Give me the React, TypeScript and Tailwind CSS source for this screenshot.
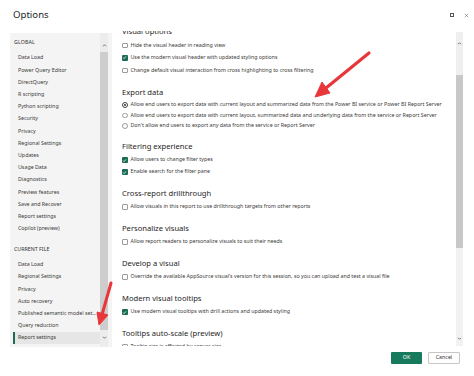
import React from "react";

function Box({ checked }: { checked?: boolean }) {
  if (checked)
    return (
      <span className="w-[5.5px] h-[5.5px] rounded-[1px] bg-[#1c6b57] flex items-center justify-center shrink-0">
        <svg viewBox="0 0 10 10" className="w-[5px] h-[5px]">
          <path d="M2.2 5.2 L4.2 7.2 L7.9 2.9" stroke="white" strokeWidth="1.6" fill="none" />
        </svg>
      </span>
    );
  return <span className="w-[5.5px] h-[5.5px] rounded-[1px] border border-[#9b9b9b] bg-white shrink-0" />;
}

function Radio({ checked }: { checked?: boolean }) {
  return (
    <span
      className={
        "w-[5.5px] h-[5.5px] rounded-full border flex items-center justify-center shrink-0 bg-white " +
        (checked ? "border-[#444]" : "border-[#9b9b9b]")
      }
    >
      {checked && <span className="w-[2.5px] h-[2.5px] rounded-full bg-[#333]" />}
    </span>
  );
}

function Row({ children, radio, checked, h = "h-[12px]" }: { children: React.ReactNode; radio?: boolean; checked?: boolean; h?: string }) {
  return (
    <div className={"flex items-center gap-[3px] " + h}>
      {radio ? <Radio checked={checked} /> : <Box checked={checked} />}
      <span className="text-[5.3px] text-[#3b3a39] whitespace-nowrap leading-none">{children}</span>
    </div>
  );
}

function Header({ children, mt = "mt-[9px]" }: { children: React.ReactNode; mt?: string }) {
  return (
    <div className={"h-[14px] flex items-center text-[7.6px] text-[#252423] whitespace-nowrap " + mt}>{children}</div>
  );
}

function Chevron({ up }: { up?: boolean }) {
  return (
    <svg viewBox="0 0 10 10" className="w-[5px] h-[5px]">
      <path d={up ? "M2 6.5 L5 3.5 L8 6.5" : "M2 3.5 L5 6.5 L8 3.5"} stroke="#444" strokeWidth="1.4" fill="none" />
    </svg>
  );
}

const globalItems = [
  "Data Load",
  "Power Query Editor",
  "DirectQuery",
  "R scripting",
  "Python scripting",
  "Security",
  "Privacy",
  "Regional Settings",
  "Updates",
  "Usage Data",
  "Diagnostics",
  "Preview features",
  "Save and Recover",
  "Report settings",
  "Copilot (preview)",
];

const fileItems = [
  "Data Load",
  "Regional Settings",
  "Privacy",
  "Auto recovery",
  "Published semantic model set...",
  "Query reduction",
  "Report settings",
];

function NavItem({ label, selected }: { label: string; selected?: boolean }) {
  return (
    <div className={"h-[12.2px] flex items-center relative " + (selected ? "bg-[#e6e6e6]" : "")}>
      {selected && <span className="absolute left-0 top-0 bottom-0 w-[2px] bg-[#1c6b57]" />}
      <span className="pl-[5px] text-[5.3px] text-[#3b3a39] whitespace-nowrap leading-none">{label}</span>
    </div>
  );
}

export default function App() {
  return (
    <div className="w-[474px] h-[376px] bg-white flex flex-col overflow-hidden relative font-['Noto_Sans',sans-serif]">
      {/* Title bar */}
      <div className="h-[31px] flex items-center pl-[13px] pr-[5px]">
        <span className="text-[9.6px] text-[#201f1e]">Options</span>
        <div className="ml-auto flex items-center gap-[10px] -mt-[1px]">
          <span className="w-[4px] h-[4px] border border-[#555] border-[0.8px]" />
          <svg viewBox="0 0 10 10" className="w-[5px] h-[5px]">
            <path d="M1.5 1.5 L8.5 8.5 M8.5 1.5 L1.5 8.5" stroke="#555" strokeWidth="1" />
          </svg>
        </div>
      </div>

      {/* Body */}
      <div className="h-[317px] flex pl-[10px]">
        {/* Left nav */}
        <div className="w-[102px] h-[314px] mt-[2px] bg-[#f4f4f4] flex">
          <div className="flex-1 pl-[3px] pt-[4px] flex flex-col">
            <div className="h-[12px] flex items-center pl-[1px] text-[5.3px] text-[#323130] tracking-[0.1px] leading-none">GLOBAL</div>
            <div className="mt-[3px]">
              {globalItems.map((l) => (
                <NavItem key={"g" + l} label={l} />
              ))}
            </div>
            <div className="h-[12px] mt-[9px] flex items-center pl-[1px] text-[5.3px] text-[#323130] leading-none">CURRENT FILE</div>
            <div className="mt-[3px]">
              {fileItems.map((l, i) => (
                <NavItem key={"f" + l} label={l} selected={i === fileItems.length - 1} />
              ))}
            </div>
          </div>
          <div className="w-[8px] mr-[4px] flex flex-col items-center">
            <div className="h-[19px] w-full bg-[#ececec] flex items-end justify-center pb-[4px]">
              <Chevron up />
            </div>
            <div className="w-full h-[278px] bg-[#cdcdcd]" />
            <div className="flex-1 w-full bg-[#ececec] flex items-center justify-center pb-[2px]">
              <Chevron />
            </div>
          </div>
        </div>

        {/* Right content */}
        <div className="flex-1 h-[317px] flex">
          <div className="flex-1 h-[315px] overflow-hidden pl-[10px]">
            <div className="-mt-[6px]">
              <Header mt="mt-0">Visual options</Header>
              <Row h="h-[12.5px]">Hide the visual header in reading view</Row>
              <Row h="h-[12.5px]" checked>
                Use the modern visual header with updated styling options
              </Row>
              <Row h="h-[12.5px]">Change default visual interaction from cross highlighting to cross filtering</Row>

              <Header>Export data</Header>
              <Row radio checked h="h-[10.5px]">
                Allow end users to export data with current layout and summarized data from the Power BI service or Power BI Report Server
              </Row>
              <Row radio h="h-[10.5px]">
                Allow end users to export data with current layout, summarized data and underlying data from the service or Report Server
              </Row>
              <Row radio h="h-[10.5px]">
                Don't allow end users to export any data from the service or Report Server
              </Row>

              <Header>Filtering experience</Header>
              <Row checked>Allow users to change filter types</Row>
              <Row checked>Enable search for the filter pane</Row>

              <Header>Cross-report drillthrough</Header>
              <Row>Allow visuals in this report to use drillthrough targets from other reports</Row>

              <Header>Personalize visuals</Header>
              <Row>Allow report readers to personalize visuals to suit their needs</Row>

              <Header>Develop a visual</Header>
              <Row>Override the available AppSource visual's version for this session, so you can upload and test a visual file</Row>

              <Header>Modern visual tooltips</Header>
              <Row checked>Use modern visual tooltips with drill actions and updated styling</Row>

              <Header>Tooltips auto-scale (preview)</Header>
              <Row>Tooltip size is affected by canvas size</Row>
            </div>
          </div>
          {/* Right scrollbar */}
          <div className="w-[7px] mr-[11px] mt-[1px] h-[314px] flex flex-col">
            <div className="h-[43px] bg-[#efefef] flex justify-center pt-[9px]">
              <Chevron up />
            </div>
            <div className="h-[173px] bg-[#c8c8c8]" />
            <div className="flex-1 bg-[#f2f2f2] flex flex-col justify-end items-center pb-[5px]">
              <Chevron />
            </div>
          </div>
        </div>
      </div>

      {/* Footer */}
      <div className="flex-1 flex justify-end items-start pt-[4px] pr-[14px] gap-[6px]">
        <button className="w-[31px] h-[12px] bg-[#177a5c] text-white text-[5.3px] rounded-[1px] flex items-center justify-center leading-none">
          OK
        </button>
        <button className="w-[32px] h-[12px] bg-white border border-[#c8c6c4] text-[#323130] text-[5.3px] rounded-[1px] flex items-center justify-center leading-none">
          Cancel
        </button>
      </div>

      {/* Red annotation arrows */}
      <svg className="absolute inset-0 pointer-events-none" width="474" height="376" viewBox="0 0 474 376">
        <line x1="369" y1="53" x2="326" y2="88" stroke="#e8373a" strokeWidth="3.2" strokeLinecap="round" />
        <polygon points="315,97 330,93 322,82" fill="#e8373a" stroke="#e8373a" strokeWidth="1" strokeLinejoin="round" />
        <line x1="111" y1="283" x2="102.5" y2="313" stroke="#e8373a" strokeWidth="3" strokeLinecap="round" />
        <polygon points="99,325 108,315 97,312" fill="#e8373a" stroke="#e8373a" strokeWidth="1" strokeLinejoin="round" />
      </svg>
    </div>
  );
}
